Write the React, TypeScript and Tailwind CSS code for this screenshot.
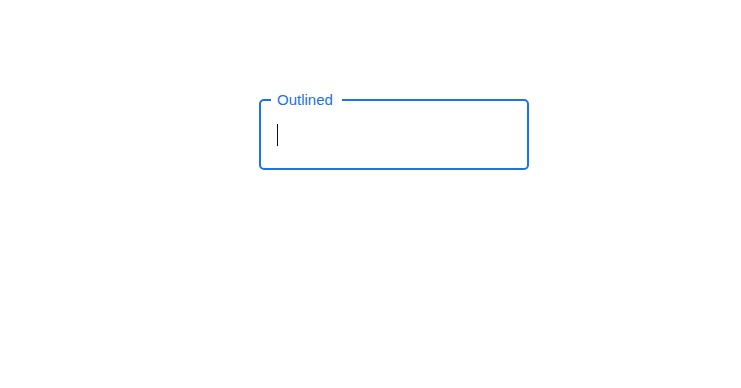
export default function App() {
  return (
    <div className="min-h-[388px] bg-white pt-[99px] pl-[259px] font-['Liberation_Sans',Arial,sans-serif]">
      <div className="relative h-[71px] w-[270px] rounded-[5px] border-2 border-[#1a73e8] pl-[16px] pt-[23px]">
        <span className="absolute left-[10px] top-[-10px] bg-white pl-[6px] pr-[9px] text-[15px] leading-[17px] text-[#1a73e8]">
          Outlined
        </span>
        <span className="block h-[22px] w-px bg-[#111]" />
      </div>
    </div>
  )
}
